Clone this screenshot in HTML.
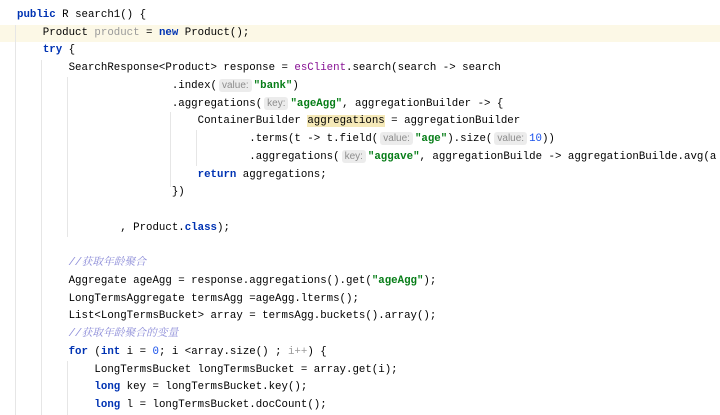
<!DOCTYPE html>
<html><head><meta charset="utf-8"><style>
html,body{margin:0;padding:0;background:#fff;width:720px;height:415px;overflow:hidden;position:relative}
.code{position:absolute;left:17px;top:7px;font-family:"Liberation Mono","Noto Sans CJK SC",monospace;font-size:10.75px;line-height:17.73px;color:#000;white-space:pre}
.cur{position:absolute;left:0;top:25px;width:720px;height:17px;background:#fcf8e6}
.k{color:#0033b3;font-weight:bold}
.s{color:#067d17;font-weight:bold}
.n{color:#1750eb}
.m{color:#871094}
.g{color:#9a9a9a}
.c{color:#8c8cd8;font-style:italic;font-family:"Liberation Mono","Noto Serif CJK SC",monospace}
.h{display:inline-block;background:#ececec;color:#8c8c8c;font-family:"Liberation Sans",sans-serif;font-size:10px;line-height:13px;padding:0 3px;border-radius:3px;margin:0 2px 0 2px;vertical-align:0px}
.hl{background:#f5e9b8}
.gd{position:absolute;width:1px;background:#e6e6e6}
</style></head><body>
<div class="cur"></div>
<div class="gd" style="left:15px;top:25px;height:392px"></div>
<div class="gd" style="left:41px;top:60px;height:357px"></div>
<div class="gd" style="left:67px;top:77px;height:160px"></div>
<div class="gd" style="left:170px;top:112px;height:75px"></div>
<div class="gd" style="left:196px;top:130px;height:36px"></div>
<div class="gd" style="left:67px;top:361px;height:56px"></div>
<div class="code"><span class="k">public</span> R search1() {
    Product <span class="g">product</span> = <span class="k">new</span> Product();
    <span class="k">try</span> {
        SearchResponse&lt;Product&gt; response = <span class="m">esClient</span>.search(search -&gt; search
                        .index(<span class="h">value:</span><span class="s">"bank"</span>)
                        .aggregations(<span class="h">key:</span><span class="s">"ageAgg"</span>, aggregationBuilder -&gt; {
                            ContainerBuilder <span class="hl">aggregations</span> = aggregationBuilder
                                    .terms(t -&gt; t.field(<span class="h">value:</span><span class="s">"age"</span>).size(<span class="h">value:</span><span class="n">10</span>))
                                    .aggregations(<span class="h">key:</span><span class="s">"aggave"</span>, aggregationBuilde -&gt; aggregationBuilde.avg(a
                            <span class="k">return</span> aggregations;
                        })

                , Product.<span class="k">class</span>);

        <span class="c">//获取年龄聚合</span>
        Aggregate ageAgg = response.aggregations().get(<span class="s">"ageAgg"</span>);
        LongTermsAggregate termsAgg =ageAgg.lterms();
        List&lt;LongTermsBucket&gt; array = termsAgg.buckets().array();
        <span class="c">//获取年龄聚合的变量</span>
        <span class="k">for</span> (<span class="k">int</span> i = <span class="n">0</span>; i &lt;array.size() ; <span class="g">i++</span>) {
            LongTermsBucket longTermsBucket = array.get(i);
            <span class="k">long</span> key = longTermsBucket.key();
            <span class="k">long</span> l = longTermsBucket.docCount();</div>
</body></html>
